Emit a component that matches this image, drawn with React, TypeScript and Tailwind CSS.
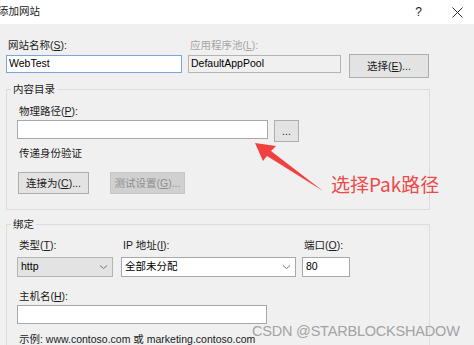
import React from 'react';

const font = { fontFamily: '"Liberation Sans", "Noto Sans CJK SC", sans-serif' };

function Label({ children, muted }: { children: React.ReactNode; muted?: boolean }) {
  return (
    <div className={`h-[16px] whitespace-nowrap pl-[2px] text-[10.5px] leading-[16px] ${muted ? 'text-[#a5a5a5]' : 'text-[#1a1a1a]'}`}>
      {children}
    </div>
  );
}

function Btn({ children, disabled, className = '' }: { children: React.ReactNode; disabled?: boolean; className?: string }) {
  return (
    <div
      className={`flex items-center justify-center whitespace-nowrap border text-[10.5px] leading-[16px] ${
        disabled ? 'border-[#c6c6c6] bg-[#d0d0d0] text-[#8e8e8e]' : 'border-[#adadad] bg-[#e3e3e3] text-[#1a1a1a]'
      } ${className}`}
    >
      {children}
    </div>
  );
}

function Chevron() {
  return (
    <svg width="9" height="6" viewBox="0 0 9 6" className="shrink-0">
      <path d="M1 1.5 L4.5 4.5 L8 1.5" fill="none" stroke="#7a7a7a" strokeWidth="1" />
    </svg>
  );
}

export default function App() {
  return (
    <div className="relative h-[345px] w-[474px] overflow-hidden bg-[#f0f0f0]" style={font}>
      {/* title bar */}
      <div className="flex h-[24px] items-center bg-white text-[10.5px] text-[#1a1a1a]">
        <span className="ml-[-2px]">添加网站</span>
        <span className="ml-auto mr-[30px] text-[12px]">?</span>
        <svg width="11" height="11" viewBox="0 0 11 11" className="mr-[11px]">
          <path d="M0.5 0.5 L10.5 10.5 M10.5 0.5 L0.5 10.5" stroke="#2a2a2a" strokeWidth="1" />
        </svg>
      </div>

      {/* site name / app pool */}
      <div className="flex px-[6px] pt-[13px]">
        <div className="w-[176px]">
          <Label>
            网站名称(<span className="underline">S</span>):
          </Label>
          <div className="mt-[2px] flex h-[18px] items-center border border-[#7aa7da] bg-white pl-[2px] text-[10.5px]">WebTest</div>
        </div>
        <div className="ml-[6px] w-[153px]">
          <Label muted>
            应用程序池(<span className="underline">L</span>):
          </Label>
          <div className="mt-[2px] flex h-[18px] items-center border border-[#b4b4b4] bg-[#f0f0f0] pl-[2px] text-[10.5px]">DefaultAppPool</div>
        </div>
        <Btn className="ml-[8px] mt-[17px] h-[24px] w-[80px]">
          选择(<span className="underline">E</span>)...
        </Btn>
      </div>

      {/* content directory */}
      <fieldset className="mx-[6px] mt-[3px] w-[424px] border border-[#dcdcdc] px-[10px] pb-[15px]">
        <legend className="ml-[-6px] px-[2px] text-[10.5px] leading-[16px] text-[#1a1a1a]">内容目录</legend>
        <div className="mt-[6px]">
          <Label>
            物理路径(<span className="underline">P</span>):
          </Label>
        </div>
        <div className="mt-[1px] flex items-start">
          <div className="h-[19px] w-[251px] border border-[#a8a8a8] bg-white" />
          <Btn className="ml-[6px] h-[22px] w-[25px] text-[9px]">...</Btn>
        </div>
        <div className="mt-[3px]">
          <Label>传递身份验证</Label>
        </div>
        <div className="mt-[11px] flex">
          <Btn className="ml-[1px] h-[22px] w-[71px]">
            连接为(<span className="underline">C</span>)...
          </Btn>
          <Btn disabled className="ml-[21px] h-[22px] w-[75px]">
            测试设置(<span className="underline">G</span>)...
          </Btn>
        </div>
      </fieldset>

      {/* binding */}
      <fieldset className="mx-[6px] mt-[6px] w-[424px] border border-[#dcdcdc] px-[10px] pb-[20px]">
        <legend className="ml-[-6px] px-[2px] text-[10.5px] leading-[16px] text-[#1a1a1a]">绑定</legend>
        <div className="mt-[5px] flex">
          <div className="w-[96px]">
            <Label>
              类型(<span className="underline">T</span>):
            </Label>
            <div className="mt-[4px] flex h-[20px] items-center justify-between border border-[#b4b4b4] bg-[#e3e3e3] pl-[3px] pr-[4px] text-[10.5px]">
              <span>http</span>
              <Chevron />
            </div>
          </div>
          <div className="ml-[8px] w-[175px]">
            <Label>
              IP 地址(<span className="underline">I</span>):
            </Label>
            <div className="mt-[4px] flex h-[20px] items-center justify-between border border-[#a8a8a8] bg-white pl-[3px] pr-[4px] text-[10.5px]">
              <span>全部未分配</span>
              <Chevron />
            </div>
          </div>
          <div className="ml-[6px] w-[48px]">
            <Label>
              端口(<span className="underline">O</span>):
            </Label>
            <div className="mt-[4px] flex h-[20px] items-center border border-[#a8a8a8] bg-white pl-[3px] text-[10.5px]">80</div>
          </div>
        </div>
        <div className="mt-[11px]">
          <Label>
            主机名(<span className="underline">H</span>):
          </Label>
        </div>
        <div className="mt-[1px] h-[19px] w-[250px] border border-[#a8a8a8] bg-white" />
        <div className="mt-[7px]">
          <Label>示例: www.contoso.com 或 marketing.contoso.com</Label>
        </div>
      </fieldset>

      {/* annotation arrow */}
      <svg className="pointer-events-none absolute left-0 top-0" width="474" height="345">
        <polygon points="255,143 276,146 271,151 323,191 267,156 263,161" fill="#f0413f" />
      </svg>
      <div
        className="absolute left-[331px] top-[172px] whitespace-nowrap text-[19px] leading-[24px] text-[#ec4a4a]"
        style={{ fontFamily: '"Noto Sans CJK SC", sans-serif' }}
      >
        选择Pak路径
      </div>

      {/* watermark */}
      <div className="absolute left-[252px] top-[321px] whitespace-nowrap text-[14.5px] leading-[20px] tracking-[-0.2px] text-[#a3a3a3]">
        CSDN @STARBLOCKSHADOW
      </div>
    </div>
  );
}
